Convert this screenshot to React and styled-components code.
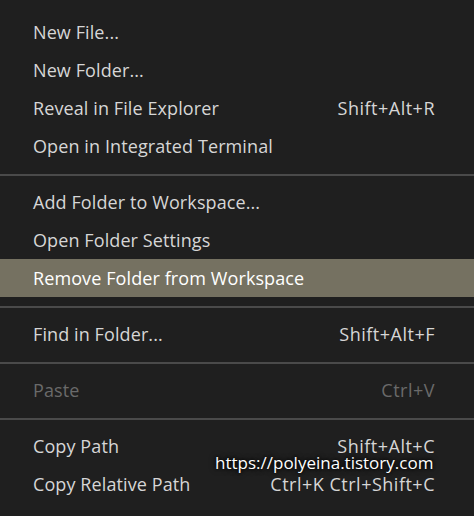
import React from 'react';
import styled, { createGlobalStyle } from 'styled-components';

const GlobalStyle = createGlobalStyle`
  html, body {
    margin: 0;
    padding: 0;
    background: #1f1f1f;
  }
`;

const Menu = styled.div`
  position: relative;
  width: 474px;
  height: 516px;
  box-sizing: border-box;
  padding-top: 13px;
  background: #1f1f1f;
  font-family: 'Open Sans', 'Noto Sans', sans-serif;
  font-size: 18px;
  color: #d6d6d6;
  overflow: hidden;
`;

const Item = styled.div`
  display: flex;
  align-items: center;
  justify-content: space-between;
  height: 38px;
  padding: 0 39px 0 33px;
  background: ${(p) => (p.$active ? '#757161' : 'transparent')};
  color: ${(p) => (p.$disabled ? '#6a6a6a' : p.$active ? '#ffffff' : '#d6d6d6')};
`;

const Label = styled.span`
  white-space: nowrap;
  letter-spacing: 0.1px;
`;

const Keys = styled.span`
  white-space: nowrap;
  letter-spacing: 0.5px;
`;

const Separator = styled.div`
  height: 18px;
  display: flex;
  align-items: center;
  padding-top: 2px;
  box-sizing: border-box;

  &::before {
    content: '';
    flex: 1;
    height: 2px;
    background: #4a4a4a;
  }
`;

const Watermark = styled.div`
  position: absolute;
  left: 215px;
  top: 451px;
  font-family: 'Open Sans', 'Noto Sans', sans-serif;
  font-size: 17px;
  color: #ffffff;
  text-shadow: 0 0 3px #000, 0 0 6px #000;
  white-space: nowrap;
`;

const sections = [
  [
    { label: 'New File...' },
    { label: 'New Folder...' },
    { label: 'Reveal in File Explorer', keys: 'Shift+Alt+R' },
    { label: 'Open in Integrated Terminal' },
  ],
  [
    { label: 'Add Folder to Workspace...' },
    { label: 'Open Folder Settings' },
    { label: 'Remove Folder from Workspace', active: true },
  ],
  [{ label: 'Find in Folder...', keys: 'Shift+Alt+F' }],
  [{ label: 'Paste', keys: 'Ctrl+V', disabled: true }],
  [
    { label: 'Copy Path', keys: 'Shift+Alt+C' },
    { label: 'Copy Relative Path', keys: 'Ctrl+K Ctrl+Shift+C' },
  ],
];

const App = () => (
  <>
    <GlobalStyle />
    <Menu>
      {sections.map((items, i) => (
        <React.Fragment key={i}>
          {i > 0 && <Separator />}
          {items.map((it) => (
            <Item key={it.label} $active={it.active} $disabled={it.disabled}>
              <Label>{it.label}</Label>
              {it.keys && <Keys>{it.keys}</Keys>}
            </Item>
          ))}
        </React.Fragment>
      ))}
      <Watermark>https://polyeina.tistory.com</Watermark>
    </Menu>
  </>
);

export default App;
